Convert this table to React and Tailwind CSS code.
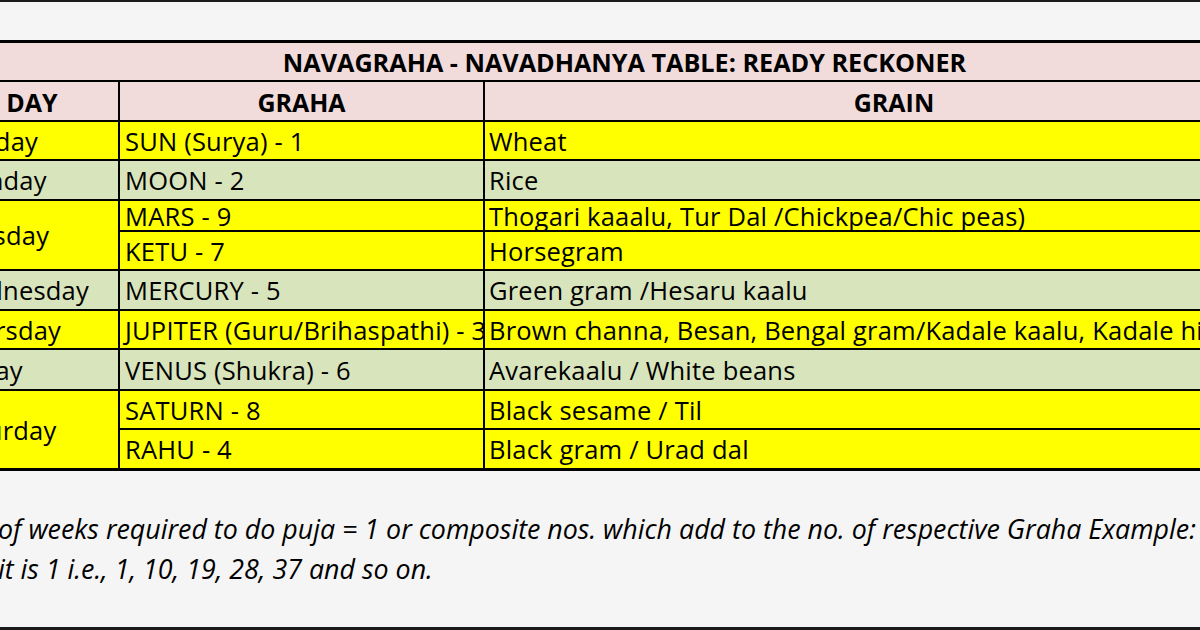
const YELLOW = 'bg-[#ffff00]';
const GREEN = 'bg-[#d8e4bc]';

const groups = [
  { day: 'Sunday', bg: YELLOW, items: [{ graha: 'SUN (Surya) - 1', grain: 'Wheat', h: 'h-[37px]' }] },
  { day: 'Monday', bg: GREEN, items: [{ graha: 'MOON - 2', grain: 'Rice', h: 'h-[38px]' }] },
  {
    day: 'Tuesday',
    bg: YELLOW,
    items: [
      { graha: 'MARS - 9', grain: 'Thogari kaaalu, Tur Dal /Chickpea/Chic peas)', h: 'h-[31px]' },
      { graha: 'KETU - 7', grain: 'Horsegram', h: 'h-[37px]' },
    ],
  },
  { day: 'Wednesday', bg: GREEN, items: [{ graha: 'MERCURY - 5', grain: 'Green gram /Hesaru kaalu', h: 'h-[38px]' }] },
  {
    day: 'Thursday',
    bg: YELLOW,
    items: [
      {
        graha: 'JUPITER (Guru/Brihaspathi) - 3',
        grain: 'Brown channa, Besan, Bengal gram/Kadale kaalu, Kadale hittu',
        h: 'h-[37px]',
      },
    ],
  },
  { day: 'Friday', bg: GREEN, items: [{ graha: 'VENUS (Shukra) - 6', grain: 'Avarekaalu / White beans', h: 'h-[39px]' }] },
  {
    day: 'Saturday',
    bg: YELLOW,
    items: [
      { graha: 'SATURN - 8', grain: 'Black sesame / Til', h: 'h-[39px]' },
      { graha: 'RAHU - 4', grain: 'Black gram / Urad dal', h: 'h-[38px]' },
    ],
  },
];

function Group({ group, last }) {
  return (
    <div className={`flex ${group.bg} ${last ? '' : 'border-b-2 border-black'}`}>
      {/* day cell spans all sub rows */}
      <div className="w-[174px] shrink-0 border-r-2 border-black flex items-center pl-[3px] pt-[2px] whitespace-nowrap">
        {group.day}
      </div>
      <div className="flex-1 flex flex-col min-w-0">
        {group.items.map((it, i) => (
          <div
            key={it.graha}
            className={`flex ${it.h} ${i < group.items.length - 1 ? 'border-b-2 border-black' : ''}`}
          >
            <div className="w-[365px] shrink-0 border-r-2 border-black flex items-center pl-[5px] pt-[2px] whitespace-nowrap overflow-hidden">
              {it.graha}
            </div>
            <div className="flex-1 flex items-center pl-[4px] pt-[2px] whitespace-nowrap overflow-hidden">
              {it.grain}
            </div>
          </div>
        ))}
      </div>
    </div>
  );
}

export default function App() {
  return (
    <div
      className="w-[1200px] h-[630px] overflow-hidden bg-[#f5f5f5] border-t-[2px] border-b-[3px] border-[#1a1a1a] flex flex-col text-black"
      style={{ fontFamily: '"Open Sans", Lato, sans-serif' }}
    >
      <div className="mt-[38px] ml-[-54px] w-[1357px] shrink-0 border-t-[3px] border-b-[3px] border-black text-[25.5px] tracking-[0.2px] leading-none">
        {/* title */}
        <div className="h-[39px] bg-[#f2dcdb] border-b-2 border-black flex items-center justify-center font-bold text-[25.2px] tracking-normal pt-[2px]">
          NAVAGRAHA - NAVADHANYA TABLE: READY RECKONER
        </div>
        {/* header */}
        <div className="flex h-[40px] bg-[#f2dcdb] border-b-2 border-black font-bold text-[25px] tracking-normal">
          <div className="w-[174px] shrink-0 border-r-2 border-black flex items-center justify-center pt-[2px]">DAY</div>
          <div className="w-[365px] shrink-0 border-r-2 border-black flex items-center justify-center pt-[2px]">GRAHA</div>
          <div className="flex-1 flex items-center justify-center pt-[2px]">GRAIN</div>
        </div>
        {groups.map((g, i) => (
          <Group key={g.day} group={g} last={i === groups.length - 1} />
        ))}
      </div>

      {/* footnote */}
      <div className="mt-[38px] ml-[-2px] italic text-[26.8px] leading-[40px] whitespace-nowrap">
        <div>of weeks required to do puja = 1 or composite nos. which add to the no. of respective Graha Example:</div>
        <div>it is 1 i.e., 1, 10, 19, 28, 37 and so on.</div>
      </div>
    </div>
  );
}
